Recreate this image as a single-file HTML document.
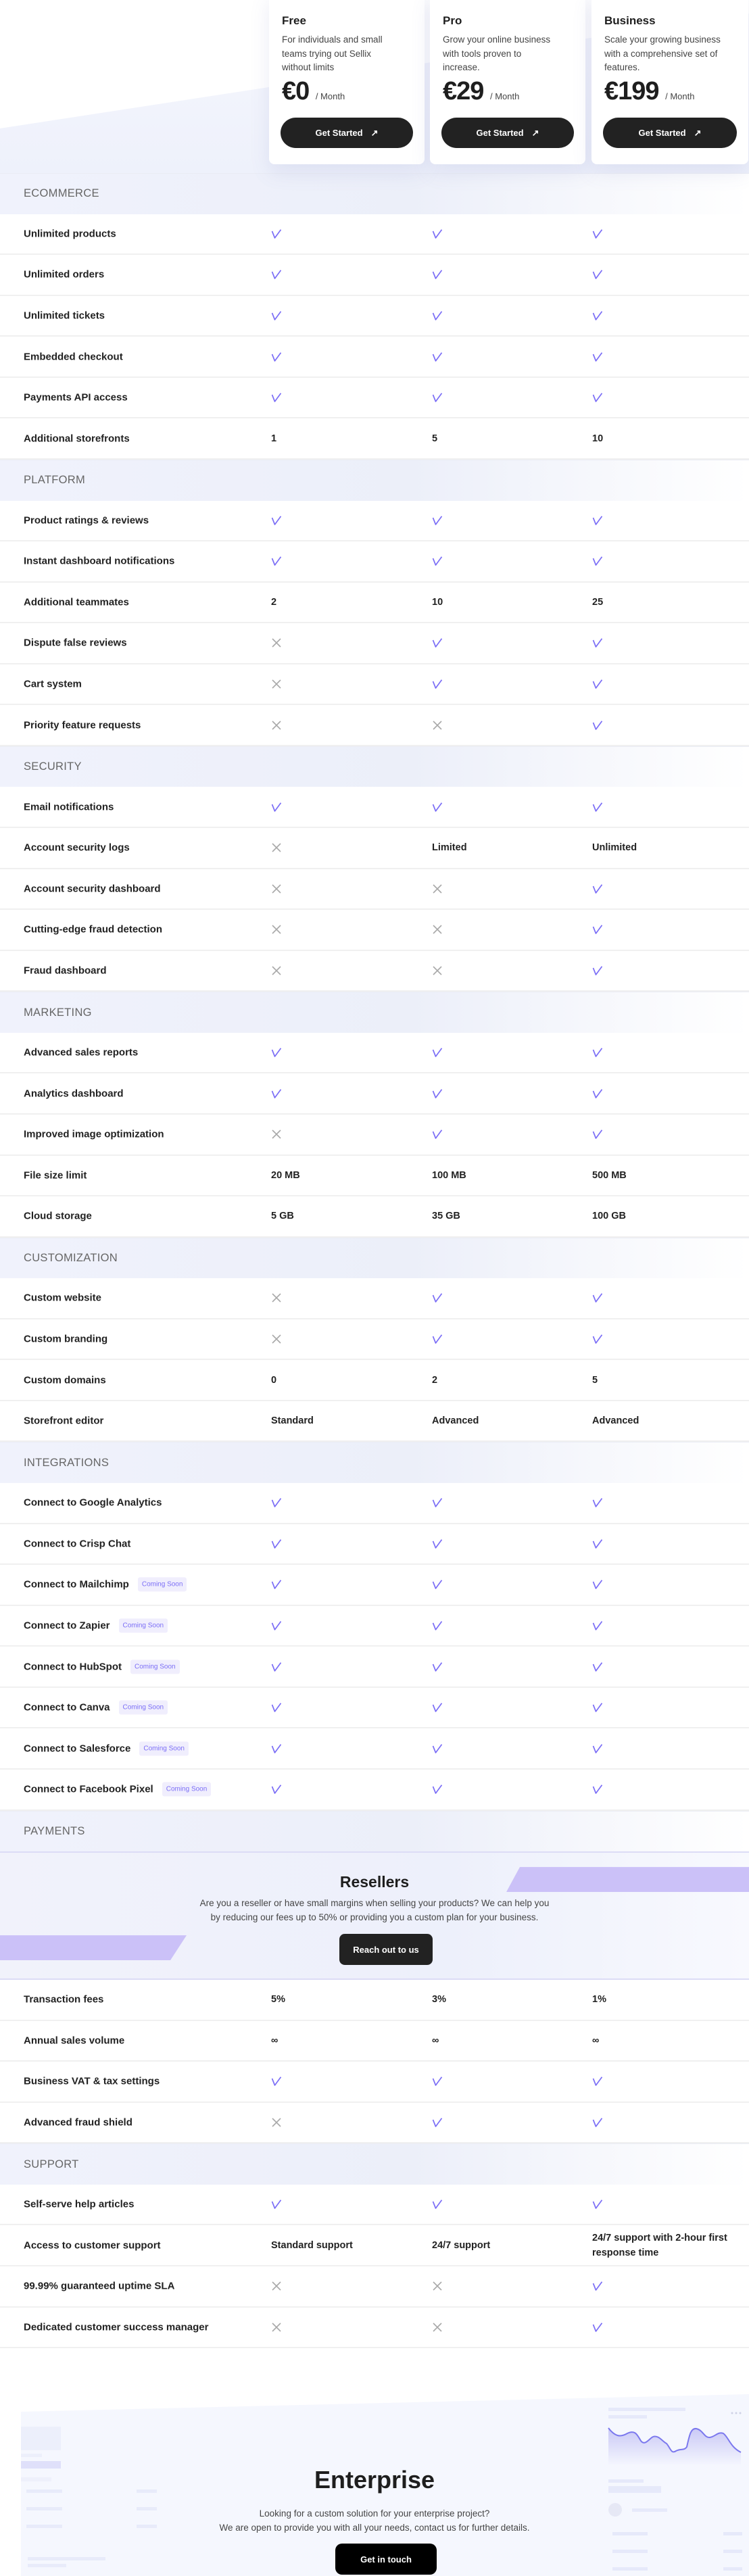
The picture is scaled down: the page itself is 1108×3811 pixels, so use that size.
<!DOCTYPE html>
<html><head><meta charset="utf-8"><style>
*{box-sizing:border-box;margin:0;padding:0}
body{width:1108px;height:3811px;background:#fff;font-family:"Liberation Sans",Arial,sans-serif;color:#1e1e1e;position:relative;overflow:hidden}
.top{position:relative;height:256px}
.topbg{position:absolute;left:0;top:0;width:1108px;height:256px;background:linear-gradient(180deg,#f6f7fd,#eef1fb);clip-path:polygon(0 190px,1108px 20px,1108px 256px,0 256px)}
.card{position:absolute;top:-12px;height:255px;background:#fff;border-radius:8px;box-shadow:0 12px 30px rgba(90,100,170,.12);padding:33px 19px 0}
.card h3{font-size:17px;font-weight:700;line-height:20px;margin-bottom:8px}
.card p{font-size:13.5px;color:#444;line-height:20.5px;height:62px;width:172px}
.price{margin-top:4px;font-size:38px;font-weight:700;letter-spacing:-1px;line-height:40px}
.price span{font-size:13px;font-weight:400;color:#444;letter-spacing:0}
.btn{position:absolute;left:17px;right:17px;top:186px;height:45px;border-radius:23px;background:#222;color:#fff;font-size:13px;font-weight:700;display:flex;align-items:center;justify-content:center;gap:12px}
.hd{height:60.575px;background:linear-gradient(90deg,#f0f2fc 0%,#eceff9 55%,#fff 100%);border-top:1px solid #eaecf4;display:flex;align-items:center;padding-left:35px;font-size:16.5px;font-weight:300;color:#666;letter-spacing:.3px}
.r{height:60.575px;border-bottom:2px solid #f0f0f0;position:relative;font-size:15px;font-weight:700}
.r>*{position:absolute;top:50%;transform:translateY(-50%)}
.l{left:35px;white-space:nowrap;display:flex;align-items:center;color:#222}
.a{left:401px}.b{left:639px}.c{left:876px}
.v{font-size:14.5px;color:#222;font-weight:700}
.cs{margin-left:13px;background:#f0eefd;color:#7b6ef6;font-size:10px;font-weight:400;padding:5px 6px;border-radius:3px}
.res{position:relative;height:190px;background:linear-gradient(90deg,#f1f2fb,#edf0fb 60%,#f8f9fe);border-top:2px solid #dcdcf6;border-bottom:2px solid #dcdcf6;text-align:center}
.res h2{position:absolute;top:30px;width:100%;font-size:23px;font-weight:700}
.res p{position:absolute;top:65px;width:100%;font-size:13.5px;color:#444;line-height:20.5px}
.res .rb{position:absolute;left:502px;top:120px;width:138px;height:46px;background:#222;color:#fff;font-size:13px;font-weight:700;border-radius:8px;display:flex;align-items:center;justify-content:center}
.ent{position:absolute;left:0;top:3530px;width:1108px;height:281px}
</style></head><body>
<div class="top"><div class="topbg"></div>
<div class="card" style="left:398px;width:230px"><h3>Free</h3><p>For individuals and small teams trying out Sellix without limits</p><div class="price">€0 <span>/ Month</span></div><div class="btn">Get Started <span>↗</span></div></div>
<div class="card" style="left:636px;width:230px"><h3>Pro</h3><p>Grow your online business with tools proven to increase.</p><div class="price">€29 <span>/ Month</span></div><div class="btn">Get Started <span>↗</span></div></div>
<div class="card" style="left:875px;width:232px"><h3>Business</h3><p>Scale your growing business with a comprehensive set of features.</p><div class="price">€199 <span>/ Month</span></div><div class="btn">Get Started <span>↗</span></div></div>
</div>
<svg width="0" height="0" style="position:absolute"><defs>
<symbol id="ck" viewBox="0 0 16 14"><path d="M1.5 3 L5.5 13 L14.5 0.8" stroke="#7b6ef6" stroke-width="1.7" fill="none" stroke-linejoin="round"/></symbol>
<symbol id="xx" viewBox="0 0 16 16"><path d="M2 2 L14 14 M14 2 L2 14" stroke="#a9a9a9" stroke-width="1.6" fill="none"/></symbol>
</defs></svg>

<div class="hd">ECOMMERCE</div>
<div class="r"><div class="l">Unlimited products</div><svg class="a" width="16" height="14"><use href="#ck"/></svg><svg class="b" width="16" height="14"><use href="#ck"/></svg><svg class="c" width="16" height="14"><use href="#ck"/></svg></div>
<div class="r"><div class="l">Unlimited orders</div><svg class="a" width="16" height="14"><use href="#ck"/></svg><svg class="b" width="16" height="14"><use href="#ck"/></svg><svg class="c" width="16" height="14"><use href="#ck"/></svg></div>
<div class="r"><div class="l">Unlimited tickets</div><svg class="a" width="16" height="14"><use href="#ck"/></svg><svg class="b" width="16" height="14"><use href="#ck"/></svg><svg class="c" width="16" height="14"><use href="#ck"/></svg></div>
<div class="r"><div class="l">Embedded checkout</div><svg class="a" width="16" height="14"><use href="#ck"/></svg><svg class="b" width="16" height="14"><use href="#ck"/></svg><svg class="c" width="16" height="14"><use href="#ck"/></svg></div>
<div class="r"><div class="l">Payments API access</div><svg class="a" width="16" height="14"><use href="#ck"/></svg><svg class="b" width="16" height="14"><use href="#ck"/></svg><svg class="c" width="16" height="14"><use href="#ck"/></svg></div>
<div class="r"><div class="l">Additional storefronts</div><span class="v a">1</span><span class="v b">5</span><span class="v c">10</span></div>

<div class="hd">PLATFORM</div>
<div class="r"><div class="l">Product ratings &amp; reviews</div><svg class="a" width="16" height="14"><use href="#ck"/></svg><svg class="b" width="16" height="14"><use href="#ck"/></svg><svg class="c" width="16" height="14"><use href="#ck"/></svg></div>
<div class="r"><div class="l">Instant dashboard notifications</div><svg class="a" width="16" height="14"><use href="#ck"/></svg><svg class="b" width="16" height="14"><use href="#ck"/></svg><svg class="c" width="16" height="14"><use href="#ck"/></svg></div>
<div class="r"><div class="l">Additional teammates</div><span class="v a">2</span><span class="v b">10</span><span class="v c">25</span></div>
<div class="r"><div class="l">Dispute false reviews</div><svg class="a" width="16" height="16"><use href="#xx"/></svg><svg class="b" width="16" height="14"><use href="#ck"/></svg><svg class="c" width="16" height="14"><use href="#ck"/></svg></div>
<div class="r"><div class="l">Cart system</div><svg class="a" width="16" height="16"><use href="#xx"/></svg><svg class="b" width="16" height="14"><use href="#ck"/></svg><svg class="c" width="16" height="14"><use href="#ck"/></svg></div>
<div class="r"><div class="l">Priority feature requests</div><svg class="a" width="16" height="16"><use href="#xx"/></svg><svg class="b" width="16" height="16"><use href="#xx"/></svg><svg class="c" width="16" height="14"><use href="#ck"/></svg></div>

<div class="hd">SECURITY</div>
<div class="r"><div class="l">Email notifications</div><svg class="a" width="16" height="14"><use href="#ck"/></svg><svg class="b" width="16" height="14"><use href="#ck"/></svg><svg class="c" width="16" height="14"><use href="#ck"/></svg></div>
<div class="r"><div class="l">Account security logs</div><svg class="a" width="16" height="16"><use href="#xx"/></svg><span class="v b">Limited</span><span class="v c">Unlimited</span></div>
<div class="r"><div class="l">Account security dashboard</div><svg class="a" width="16" height="16"><use href="#xx"/></svg><svg class="b" width="16" height="16"><use href="#xx"/></svg><svg class="c" width="16" height="14"><use href="#ck"/></svg></div>
<div class="r"><div class="l">Cutting-edge fraud detection</div><svg class="a" width="16" height="16"><use href="#xx"/></svg><svg class="b" width="16" height="16"><use href="#xx"/></svg><svg class="c" width="16" height="14"><use href="#ck"/></svg></div>
<div class="r"><div class="l">Fraud dashboard</div><svg class="a" width="16" height="16"><use href="#xx"/></svg><svg class="b" width="16" height="16"><use href="#xx"/></svg><svg class="c" width="16" height="14"><use href="#ck"/></svg></div>

<div class="hd">MARKETING</div>
<div class="r"><div class="l">Advanced sales reports</div><svg class="a" width="16" height="14"><use href="#ck"/></svg><svg class="b" width="16" height="14"><use href="#ck"/></svg><svg class="c" width="16" height="14"><use href="#ck"/></svg></div>
<div class="r"><div class="l">Analytics dashboard</div><svg class="a" width="16" height="14"><use href="#ck"/></svg><svg class="b" width="16" height="14"><use href="#ck"/></svg><svg class="c" width="16" height="14"><use href="#ck"/></svg></div>
<div class="r"><div class="l">Improved image optimization</div><svg class="a" width="16" height="16"><use href="#xx"/></svg><svg class="b" width="16" height="14"><use href="#ck"/></svg><svg class="c" width="16" height="14"><use href="#ck"/></svg></div>
<div class="r"><div class="l">File size limit</div><span class="v a">20 MB</span><span class="v b">100 MB</span><span class="v c">500 MB</span></div>
<div class="r"><div class="l">Cloud storage</div><span class="v a">5 GB</span><span class="v b">35 GB</span><span class="v c">100 GB</span></div>

<div class="hd">CUSTOMIZATION</div>
<div class="r"><div class="l">Custom website</div><svg class="a" width="16" height="16"><use href="#xx"/></svg><svg class="b" width="16" height="14"><use href="#ck"/></svg><svg class="c" width="16" height="14"><use href="#ck"/></svg></div>
<div class="r"><div class="l">Custom branding</div><svg class="a" width="16" height="16"><use href="#xx"/></svg><svg class="b" width="16" height="14"><use href="#ck"/></svg><svg class="c" width="16" height="14"><use href="#ck"/></svg></div>
<div class="r"><div class="l">Custom domains</div><span class="v a">0</span><span class="v b">2</span><span class="v c">5</span></div>
<div class="r"><div class="l">Storefront editor</div><span class="v a">Standard</span><span class="v b">Advanced</span><span class="v c">Advanced</span></div>

<div class="hd">INTEGRATIONS</div>
<div class="r"><div class="l">Connect to Google Analytics</div><svg class="a" width="16" height="14"><use href="#ck"/></svg><svg class="b" width="16" height="14"><use href="#ck"/></svg><svg class="c" width="16" height="14"><use href="#ck"/></svg></div>
<div class="r"><div class="l">Connect to Crisp Chat</div><svg class="a" width="16" height="14"><use href="#ck"/></svg><svg class="b" width="16" height="14"><use href="#ck"/></svg><svg class="c" width="16" height="14"><use href="#ck"/></svg></div>
<div class="r"><div class="l">Connect to Mailchimp<span class="cs">Coming Soon</span></div><svg class="a" width="16" height="14"><use href="#ck"/></svg><svg class="b" width="16" height="14"><use href="#ck"/></svg><svg class="c" width="16" height="14"><use href="#ck"/></svg></div>
<div class="r"><div class="l">Connect to Zapier<span class="cs">Coming Soon</span></div><svg class="a" width="16" height="14"><use href="#ck"/></svg><svg class="b" width="16" height="14"><use href="#ck"/></svg><svg class="c" width="16" height="14"><use href="#ck"/></svg></div>
<div class="r"><div class="l">Connect to HubSpot<span class="cs">Coming Soon</span></div><svg class="a" width="16" height="14"><use href="#ck"/></svg><svg class="b" width="16" height="14"><use href="#ck"/></svg><svg class="c" width="16" height="14"><use href="#ck"/></svg></div>
<div class="r"><div class="l">Connect to Canva<span class="cs">Coming Soon</span></div><svg class="a" width="16" height="14"><use href="#ck"/></svg><svg class="b" width="16" height="14"><use href="#ck"/></svg><svg class="c" width="16" height="14"><use href="#ck"/></svg></div>
<div class="r"><div class="l">Connect to Salesforce<span class="cs">Coming Soon</span></div><svg class="a" width="16" height="14"><use href="#ck"/></svg><svg class="b" width="16" height="14"><use href="#ck"/></svg><svg class="c" width="16" height="14"><use href="#ck"/></svg></div>
<div class="r"><div class="l">Connect to Facebook Pixel<span class="cs">Coming Soon</span></div><svg class="a" width="16" height="14"><use href="#ck"/></svg><svg class="b" width="16" height="14"><use href="#ck"/></svg><svg class="c" width="16" height="14"><use href="#ck"/></svg></div>

<div class="hd">PAYMENTS</div>
<div class="res">
<div style="position:absolute;left:749px;top:21px;width:360px;height:37px;background:#cbc1f8;clip-path:polygon(20px 0,360px 0,360px 37px,0 37px)"></div>
<div style="position:absolute;left:0;top:122px;width:276px;height:37px;background:#cbc1f8;clip-path:polygon(0 0,276px 0,252px 37px,0 37px)"></div>
<h2>Resellers</h2>
<p>Are you a reseller or have small margins when selling your products? We can help you<br>by reducing our fees up to 50% or providing you a custom plan for your business.</p>
<div class="rb">Reach out to us</div>
</div>
<div class="r"><div class="l">Transaction fees</div><span class="v a">5%</span><span class="v b">3%</span><span class="v c">1%</span></div>
<div class="r"><div class="l">Annual sales volume</div><span class="v a">∞</span><span class="v b">∞</span><span class="v c">∞</span></div>
<div class="r"><div class="l">Business VAT &amp; tax settings</div><svg class="a" width="16" height="14"><use href="#ck"/></svg><svg class="b" width="16" height="14"><use href="#ck"/></svg><svg class="c" width="16" height="14"><use href="#ck"/></svg></div>
<div class="r"><div class="l">Advanced fraud shield</div><svg class="a" width="16" height="16"><use href="#xx"/></svg><svg class="b" width="16" height="14"><use href="#ck"/></svg><svg class="c" width="16" height="14"><use href="#ck"/></svg></div>

<div class="hd">SUPPORT</div>
<div class="r"><div class="l">Self-serve help articles</div><svg class="a" width="16" height="14"><use href="#ck"/></svg><svg class="b" width="16" height="14"><use href="#ck"/></svg><svg class="c" width="16" height="14"><use href="#ck"/></svg></div>
<div class="r"><div class="l">Access to customer support</div><span class="v a">Standard support</span><span class="v b">24/7 support</span><span class="v c" style="line-height:22px">24/7 support with 2-hour first<br>response time</span></div>
<div class="r"><div class="l">99.99% guaranteed uptime SLA</div><svg class="a" width="16" height="16"><use href="#xx"/></svg><svg class="b" width="16" height="16"><use href="#xx"/></svg><svg class="c" width="16" height="14"><use href="#ck"/></svg></div>
<div class="r"><div class="l">Dedicated customer success manager</div><svg class="a" width="16" height="16"><use href="#xx"/></svg><svg class="b" width="16" height="16"><use href="#xx"/></svg><svg class="c" width="16" height="14"><use href="#ck"/></svg></div>

<div class="ent">
<div style="position:absolute;left:31px;top:0;width:1077px;height:281px;background:#f5f7fe;clip-path:polygon(0 38px,1077px 12px,1077px 281px,0 281px)"></div>
<svg style="position:absolute;left:0;top:0" width="1108" height="281">
<rect x="31" y="60" width="59" height="35" fill="#eceffb"/>
<rect x="31" y="100" width="31" height="5" fill="#eceffb"/>
<rect x="31" y="111" width="59" height="11" fill="#dfe0fa"/>
<rect x="31" y="135" width="45" height="6" fill="#eef0fb"/>
<rect x="39" y="153" width="53" height="5" fill="#e8ebfa"/><rect x="202" y="153" width="30" height="5" fill="#e8ebfa"/>
<rect x="39" y="179" width="53" height="5" fill="#e8ebfa"/><rect x="202" y="179" width="30" height="5" fill="#e8ebfa"/>
<rect x="39" y="205" width="53" height="5" fill="#e8ebfa"/><rect x="202" y="205" width="30" height="5" fill="#e8ebfa"/>
<rect x="41" y="253" width="115" height="5" fill="#e8ebfa"/><rect x="41" y="263" width="57" height="5" fill="#e8ebfa"/>
<circle cx="118" cy="305" r="20" fill="#e3e5f4"/>
<rect x="900" y="32" width="114" height="5" fill="#e6e9fa"/><rect x="900" y="43" width="57" height="5" fill="#e6e9fa"/>
<circle cx="1083" cy="40" r="1.5" fill="#cfd2e6"/><circle cx="1089" cy="40" r="1.5" fill="#cfd2e6"/><circle cx="1095" cy="40" r="1.5" fill="#cfd2e6"/>
<defs><linearGradient id="cg" x1="0" y1="0" x2="0" y2="1"><stop offset="0" stop-color="#c9c8f6"/><stop offset="1" stop-color="#f5f7fe"/></linearGradient></defs>
<path d="M900 62 C910 75 918 76 928 70 C940 64 943 73 948 81 C954 89 960 78 966 75 C974 72 980 82 986 85 C992 92 993 101 1000 96 C1007 92 1012 96 1016 90 C1020 72 1022 62 1030 63 C1040 65 1042 77 1050 76 C1058 75 1062 67 1070 70 C1078 76 1080 90 1096 98 L1096 118 L900 118 Z" fill="url(#cg)"/>
<path d="M900 62 C910 75 918 76 928 70 C940 64 943 73 948 81 C954 89 960 78 966 75 C974 72 980 82 986 85 C992 92 993 101 1000 96 C1007 92 1012 96 1016 90 C1020 72 1022 62 1030 63 C1040 65 1042 77 1050 76 C1058 75 1062 67 1070 70 C1078 76 1080 90 1096 98" fill="none" stroke="#7b78ee" stroke-width="2"/>
<rect x="900" y="138" width="52" height="5" fill="#e6e9fa"/><rect x="900" y="148" width="78" height="10" fill="#e6e9fa"/>
<circle cx="910" cy="183" r="10" fill="#e6e8f5"/><rect x="935" y="181" width="52" height="5" fill="#e6e9fa"/>
<rect x="906" y="216" width="52" height="5" fill="#e6e9fa"/><rect x="1070" y="216" width="28" height="5" fill="#e6e9fa"/>
<rect x="906" y="242" width="52" height="5" fill="#e6e9fa"/><rect x="1070" y="242" width="28" height="5" fill="#e6e9fa"/>
<rect x="906" y="268" width="52" height="5" fill="#e6e9fa"/><rect x="1070" y="268" width="28" height="5" fill="#e6e9fa"/>
</svg>
<div style="position:absolute;top:118px;width:1108px;text-align:center;font-size:36px;font-weight:700;color:#1e1e1e">Enterprise</div>
<div style="position:absolute;top:179px;width:1108px;text-align:center;font-size:13.5px;color:#444;line-height:20.5px">Looking for a custom solution for your enterprise project?<br>We are open to provide you with all your needs, contact us for further details.</div>
<div style="position:absolute;left:496px;top:233px;width:150px;height:46px;background:#000;color:#fff;border-radius:10px;font-size:13px;font-weight:700;display:flex;align-items:center;justify-content:center">Get in touch</div>
</div>
</body></html>
